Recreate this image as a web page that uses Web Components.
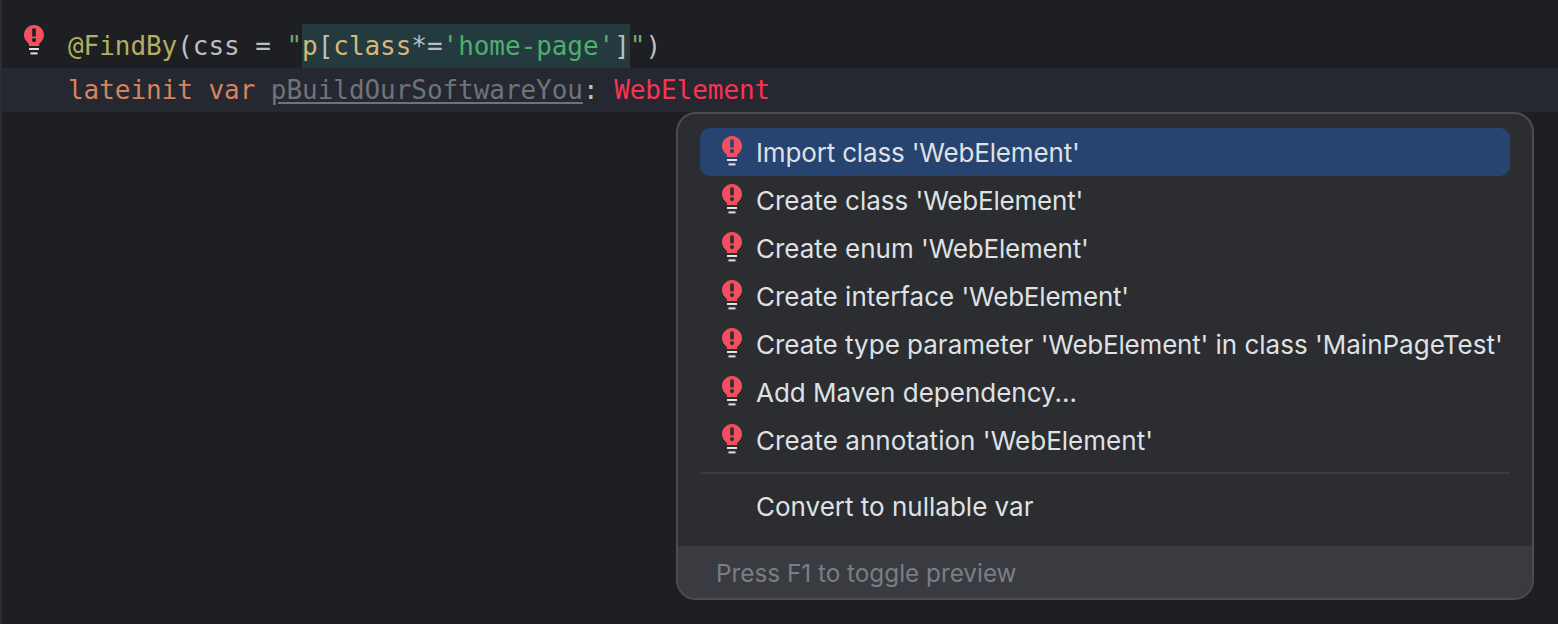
<!DOCTYPE html>
<html><head><meta charset="utf-8">
<style>
html,body{margin:0;padding:0;width:1558px;height:624px;overflow:hidden;background:#1e1f22}
</style></head><body>
<ide-window></ide-window>
<script>
const BULB=`<svg width="20" height="30" viewBox="0 0 20 30" style="display:block"><path fill="#f2505f" fill-rule="evenodd" d="M10 0C15.5 0 20 4.5 20 10C20 13.2 18.5 15.6 16.5 17.4C15.4 18.4 15 19.5 15 21H5C5 19.5 4.6 18.4 3.5 17.4C1.5 15.6 0 13.2 0 10C0 4.5 4.5 0 10 0ZM8.2 3.6V11.4H11.8V3.6ZM10 13A2.1 2.1 0 1 0 10 17.2A2.1 2.1 0 1 0 10 13Z"/><rect x="5" y="23" width="10" height="2" fill="#dfe1e5"/><rect x="6.5" y="27.4" width="7" height="2" fill="#dfe1e5"/></svg>`;
class BulbIcon extends HTMLElement{constructor(){super();this.attachShadow({mode:'open'}).innerHTML=`<style>:host{display:block;width:20px;height:30px}</style>${BULB}`;}}
customElements.define('bulb-icon',BulbIcon);

class CodeLine extends HTMLElement{constructor(){super();this.attachShadow({mode:'open'}).innerHTML=`<style>
:host{display:block;height:44px;padding-left:68px;white-space:pre;font:26px/44px "DejaVu Sans Mono",monospace;letter-spacing:-.05px;color:#bcbec4}
:host([current]){background:#252830}
</style><slot></slot>`;}}
customElements.define('code-line',CodeLine);

class MenuItem extends HTMLElement{constructor(){super();this.attachShadow({mode:'open'}).innerHTML=`<style>
:host{display:flex;align-items:center;height:48px;box-sizing:border-box;padding-left:22px;gap:14px;border-radius:10px;font:26px Inter,sans-serif;color:#dfe1e5;white-space:nowrap}
:host([selected]){background:#27436f}
.i{width:20px;height:30px;flex:none;margin-top:-2px}
</style><span class="i"><slot name="icon"></slot></span><span class="t"><slot></slot></span>`;}}
customElements.define('menu-item',MenuItem);

class IntentionPopup extends HTMLElement{constructor(){super();this.attachShadow({mode:'open'}).innerHTML=`<style>
:host{position:absolute;left:674px;top:112px;width:858px;height:488px;box-sizing:border-box;border:2px solid #4b4d52;border-radius:20px;background:#2b2d30;overflow:hidden;display:flex;flex-direction:column}
.list{flex:1;padding:14px 22px 0;display:flex;flex-direction:column}
hr{border:0;height:2px;background:#393b40;margin:8px 0 8px;flex:none}
.w{letter-spacing:-.2px}
.a{letter-spacing:.03px}
.b{letter-spacing:-.16px}
footer{height:52px;flex:none;background:#393b40;display:flex;align-items:center;padding:1px 0 0 38px;box-sizing:border-box;font:24.3px Inter,sans-serif;color:#7a7e85;white-space:nowrap}
</style><div class="list">
<menu-item selected><bulb-icon slot="icon"></bulb-icon><span class="b">Import class 'WebElement'</span></menu-item>
<menu-item><bulb-icon slot="icon"></bulb-icon>Create class <span class="w">'WebElement'</span></menu-item>
<menu-item><bulb-icon slot="icon"></bulb-icon>Create enum <span class="w">'WebElement'</span></menu-item>
<menu-item><bulb-icon slot="icon"></bulb-icon>Create interface <span class="w">'WebElement'</span></menu-item>
<menu-item><bulb-icon slot="icon"></bulb-icon>Create type parameter <span class="w">'WebElement'</span> in class 'MainPageTest'</menu-item>
<menu-item><bulb-icon slot="icon"></bulb-icon>Add Maven dependency...</menu-item>
<menu-item><bulb-icon slot="icon"></bulb-icon><span class="a">Create annotation 'WebElement'</span></menu-item>
<hr>
<menu-item>Convert to nullable var</menu-item>
</div><footer>Press F1 to toggle preview</footer>`;}}
customElements.define('intention-popup',IntentionPopup);

class IdeWindow extends HTMLElement{constructor(){super();this.attachShadow({mode:'open'}).innerHTML=`<style>
:host{display:block;position:relative;width:1558px;height:624px;box-sizing:border-box;background:#1e1f22;border-left:2px solid #2b2d30;padding-top:24px;overflow:hidden}
.code{margin-left:-2px}
.g{position:absolute;left:22px;top:25px}
.ann{color:#b3ae60}.kw{color:#d5835f}.str{color:#6aab73}.hl{background:#233a3f;display:inline-block;height:44px;vertical-align:top}
.rx{color:#d5b778}.gr{color:#4fae6c}.un{color:#6f737a;text-decoration:underline;text-underline-offset:3px;text-decoration-thickness:2px}.err{color:#fa3354}
</style>
<div class="g"><bulb-icon></bulb-icon></div>
<div class="code">
<code-line><span><span class="ann">@FindBy</span>(css = <span class="str">"</span><span class="hl"><span class="rx">p</span>[<span class="rx">class</span>*=<span class="gr">'home-page'</span>]</span><span class="str">"</span>)</span></code-line>
<code-line current><span><span class="kw">lateinit var</span> <span class="un">pBuildOurSoftwareYou</span>: <span class="err">WebElement</span></span></code-line>
</div>
<intention-popup></intention-popup>`;}}
customElements.define('ide-window',IdeWindow);
</script>
</body></html>
